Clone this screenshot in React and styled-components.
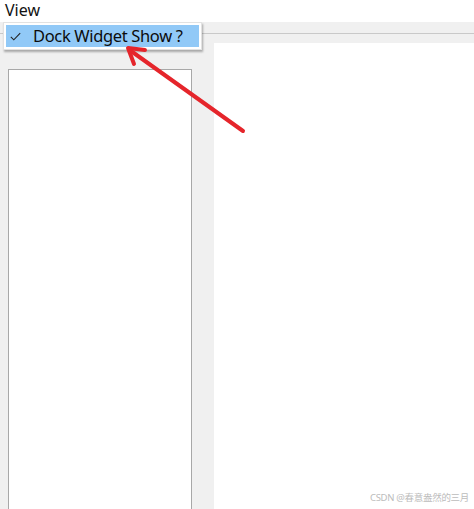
import styled, { createGlobalStyle } from "styled-components";

const Global = createGlobalStyle`
  html, body { margin: 0; padding: 0; }
  body {
    background: #f0f0f0;
    font-family: "Noto Sans", "Open Sans", sans-serif;
    overflow: hidden;
  }
`;

const Window = styled.div`
  position: relative;
  width: 474px;
  height: 509px;
  display: flex;
  flex-direction: column;
  background: #f0f0f0;
  overflow: hidden;
`;

const MenuBar = styled.div`
  height: 22px;
  background: #fff;
  display: flex;
  align-items: center;
  padding-left: 5px;
  font-size: 16px;
  color: #111;
`;

const MenuTitle = styled.span`
  line-height: 20px;
  margin-top: -3px;
`;

const ToolStrip = styled.div`
  height: 11px;
  border-bottom: 1px solid #c9c9c9;
  background: #f0f0f0;
`;

const Main = styled.div`
  flex: 1;
  display: flex;
  min-height: 0;
`;

const Dock = styled.div`
  width: 214px;
  padding: 35px 22px 0 8px;
  box-sizing: border-box;
  display: flex;
`;

const DockContent = styled.div`
  flex: 1;
  background: #fff;
  border: 1px solid #a8a8a8;
  border-bottom: none;
`;

const Central = styled.div`
  flex: 1;
  margin-top: 9px;
  background: #fff;
`;

const Popup = styled.div`
  position: absolute;
  left: 3px;
  top: 22px;
  width: 199px;
  height: 28px;
  box-sizing: border-box;
  padding: 2px;
  background: #fff;
  border: 1px solid #e2e2e2;
  box-shadow: 1px 2px 2px rgba(0, 0, 0, 0.3);
`;

const Item = styled.div`
  height: 100%;
  display: flex;
  align-items: center;
  background: ${(p) => (p.$active ? "#91c9f7" : "transparent")};
  font-size: 16.5px;
  color: #0c0c0c;
`;

const Check = styled.span`
  width: 27px;
  display: flex;
  justify-content: flex-start;
  padding-left: 4px;
  box-sizing: border-box;
`;

const Label = styled.span`
  white-space: nowrap;
  letter-spacing: -0.35px;
  margin-top: -1px;
`;

const Overlay = styled.svg`
  position: absolute;
  left: 0;
  top: 0;
  pointer-events: none;
`;

const Watermark = styled.div`
  position: absolute;
  right: 5px;
  bottom: 5px;
  font-size: 9.5px;
  color: #bcbcbc;
  font-family: "Noto Sans", "Noto Sans CJK SC", sans-serif;
  letter-spacing: -0.3px;
`;

export default function App() {
  return (
    <>
      <Global />
      <Window>
        <MenuBar>
          <MenuTitle>View</MenuTitle>
        </MenuBar>
        <ToolStrip />
        <Main>
          <Dock>
            <DockContent />
          </Dock>
          <Central />
        </Main>

        <Popup>
          <Item $active>
            <Check>
              <svg width="11" height="9" viewBox="0 0 11 9">
                <path d="M0.8 4.8 L3.8 7.8 L10.2 1.2" fill="none" stroke="#222" strokeWidth="1.1" />
              </svg>
            </Check>
            <Label>Dock Widget Show ?</Label>
          </Item>
        </Popup>

        <Overlay width="474" height="509">
          <line x1="243" y1="131" x2="131" y2="51" stroke="#e5252b" strokeWidth="4" strokeLinecap="round" />
          <polyline points="134,64 128,48 145,50" fill="none" stroke="#e5252b" strokeWidth="4" strokeLinecap="round" strokeLinejoin="round" />
        </Overlay>

        <Watermark>CSDN @春意盎然的三月</Watermark>
      </Window>
    </>
  );
}
